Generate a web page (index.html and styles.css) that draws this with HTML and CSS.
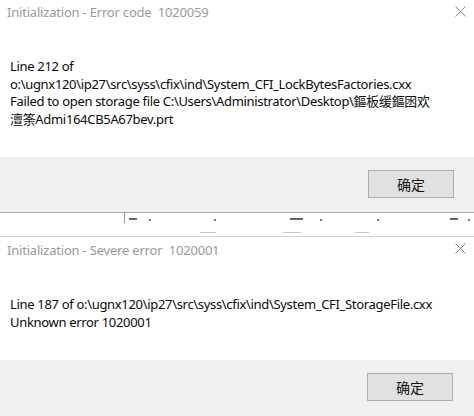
FILE: index.html
```html
<!DOCTYPE html>
<html lang="zh-CN">
<head>
  <meta charset="UTF-8">
  <title>Initialization errors</title>
  <link rel="stylesheet" href="styles.css">
</head>
<body>
  <div class="dialog first">
    <div class="titlebar">
      <span class="title">Initialization - Error code&nbsp; 1020059</span>
      <svg class="close" viewBox="0 0 11 11"><path d="M0.5 0.5L10.5 10.5M10.5 0.5L0.5 10.5"/></svg>
    </div>
    <div class="message">
      Line 212 of<br>
      o:\ugnx120\ip27\src\syss\cfix\ind\System_CFI_LockBytesFactories.cxx<br>
      Failed to open storage file C:\Users\Administrator\Desktop\鏂板缓鏂囦欢<br>
      澶筡Admi164CB5A67bev.prt
    </div>
    <div class="footer">
      <button class="ok-btn">确定</button>
    </div>
  </div>

  <div class="gap">
    <span class="frag edge"></span>
    <span class="frag bar" style="left:129px;top:5px;width:8px"></span>
    <span class="frag dot" style="left:149px;top:6px"></span>
    <span class="frag dot" style="left:214px;top:6px"></span>
    <span class="frag bar" style="left:290px;top:5px;width:13px"></span>
    <span class="frag dot" style="left:320px;top:6px"></span>
    <span class="frag dot" style="left:377px;top:6px"></span>
    <span class="frag bar" style="left:450px;top:5px;width:8px"></span>
    <span class="frag dot" style="left:468px;top:6px"></span>
    <span class="frag faint" style="left:200px;top:19px;width:16px"></span>
    <span class="frag faint" style="left:283px;top:19px;width:18px"></span>
    <span class="frag faint" style="left:355px;top:19px;width:14px"></span>
  </div>

  <div class="dialog second">
    <div class="titlebar">
      <span class="title">Initialization - Severe error&nbsp; 1020001</span>
      <svg class="close" viewBox="0 0 11 11"><path d="M0.5 0.5L10.5 10.5M10.5 0.5L0.5 10.5"/></svg>
    </div>
    <div class="message">
      Line 187 of o:\ugnx120\ip27\src\syss\cfix\ind\System_CFI_StorageFile.cxx<br>
      Unknown error 1020001
    </div>
    <div class="footer">
      <button class="ok-btn">确定</button>
    </div>
  </div>
</body>
</html>
```

FILE: styles.css
```css
body {
  margin: 0;
  width: 474px;
  height: 416px;
  overflow: hidden;
  background: #fff;
  font-family: "Noto Sans", "Noto Sans CJK SC", sans-serif;
  color: #000;
}

.dialog {
  display: flex;
  flex-direction: column;
  background: #fff;
}

.dialog.first {
  height: 212px;
  border-bottom: 1px solid #a8a8a8;
}

.dialog.second {
  height: 179px;
}

.titlebar {
  display: flex;
  justify-content: space-between;
  align-items: center;
  height: 24px;
  padding: 0 8px 0 7px;
}

.second .titlebar {
  height: 26px;
}

.title {
  font-size: 13px;
  letter-spacing: -0.2px;
  color: #9a9a9a;
}

.close {
  width: 11px;
  height: 11px;
  margin-top: -2px;
  fill: none;
  stroke: #8a8a8a;
  stroke-width: 1;
}

.second .close {
  margin-top: -4px;
}

.message {
  flex: 1;
  padding: 34px 0 0 10px;
  font-size: 13px;
  letter-spacing: -0.32px;
  line-height: 17.6px;
  color: #0a0a0a;
}

.second .message {
  padding-top: 33px;
}

.footer {
  display: flex;
  justify-content: flex-end;
  align-items: flex-start;
  height: 55px;
  padding: 13px 20px 0 0;
  box-sizing: border-box;
  background: #f0f0f0;
}

.second .footer {
  height: 56px;
  padding-right: 21px;
}

.ok-btn {
  width: 86px;
  height: 28px;
  border: 1px solid #adadad;
  background: #e1e1e1;
  font-family: inherit;
  font-size: 14px;
  color: #111;
  padding: 0;
}

.gap {
  position: relative;
  height: 23px;
  border-bottom: 1px solid #d4d4d4;
  background: #fff;
}

.frag {
  position: absolute;
  display: block;
}

.frag.edge {
  left: 124px;
  top: 0;
  width: 1px;
  height: 10px;
  background: #9a9a9a;
}

.frag.bar {
  height: 2px;
  background: #666;
}

.frag.dot {
  width: 2px;
  height: 2px;
  background: #777;
}

.frag.faint {
  height: 1px;
  background: #c8c8c8;
}
```
